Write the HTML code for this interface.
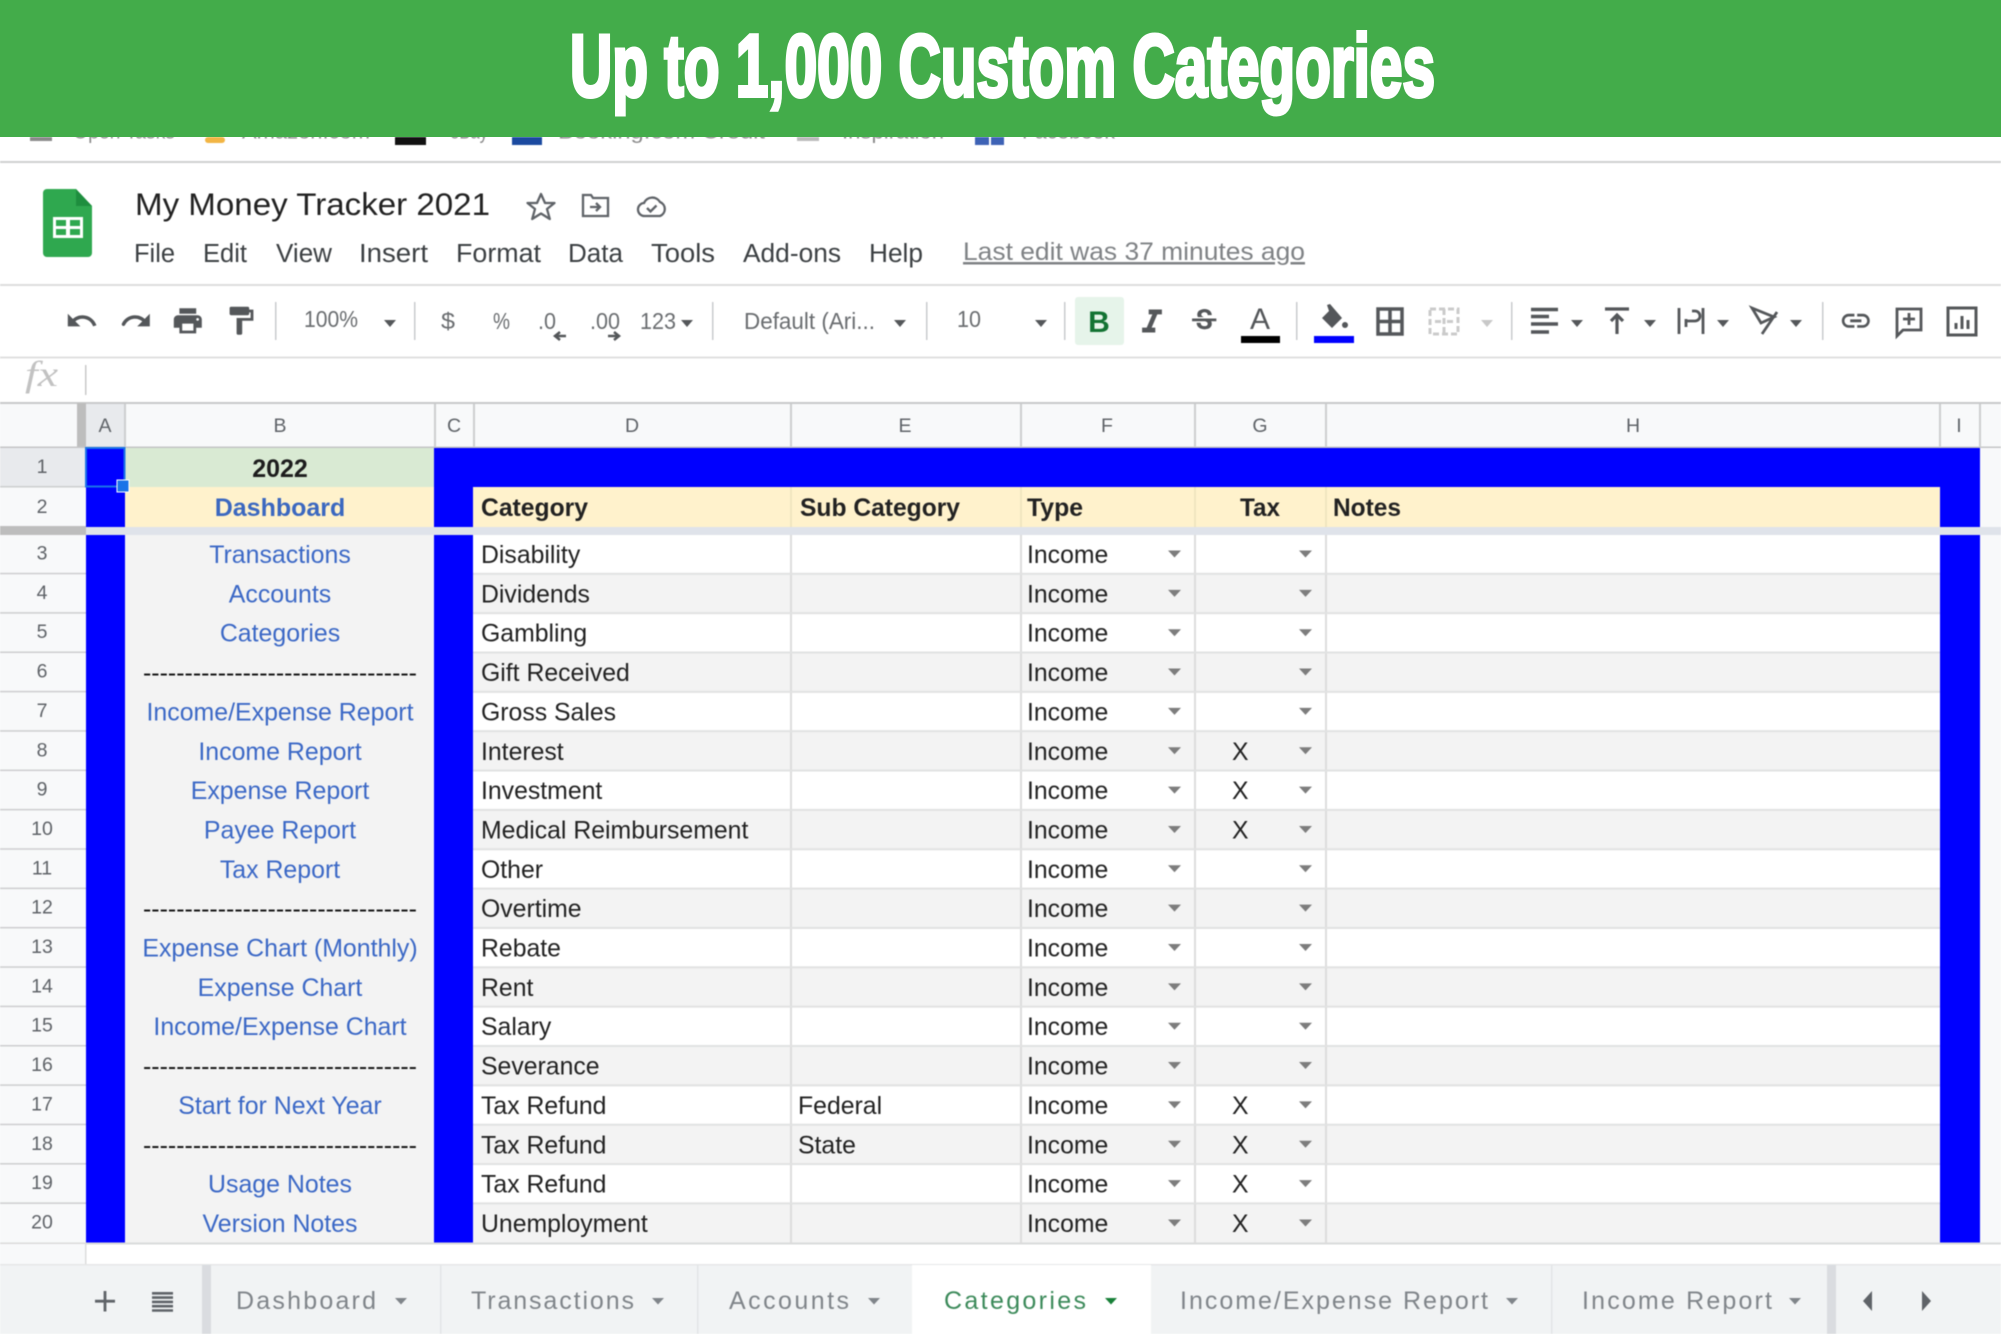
<!DOCTYPE html>
<html><head><meta charset="utf-8"><title>My Money Tracker 2021</title>
<style>
html,body{margin:0;padding:0;background:#fff;width:2001px;height:1334px;overflow:hidden}
svg{display:block;font-family:"Liberation Sans",Arial,sans-serif}
.soft{filter:blur(.5px)}
.n{font-size:19.5px;fill:#5f6368;text-anchor:middle}
.h{font-size:19.5px;fill:#5f6368;text-anchor:middle}
.c{font-size:24.8px;fill:#222}
.l{font-size:24.9px;fill:#3b68c6;text-anchor:middle}
.d{font-size:24.6px;fill:#111;text-anchor:middle}
.b{font-size:25px;font-weight:bold;fill:#222}
.m{font-size:25.5px;fill:#3c4043}
.t{font-size:23px;fill:#6a6d70}
.g{font-size:25px;fill:#80858a}
.s{fill:#c9cbce}
.k{fill:#54575a}
</style></head><body>
<svg width="2001" height="1334" viewBox="0 0 2001 1334" xmlns="http://www.w3.org/2000/svg">
<defs><path id="a" d="M0 .5h13l-6.500 7z" fill="#7d7d7d"/><path id="ta" d="M0 0h12l-6 7z" fill="#54575a"/></defs>
<rect width="2001" height="1334" fill="#fff"/>
<g class="soft">
<!-- bookmarks cut by banner -->
<g fill="#8a8a8a" font-size="21">
<text x="73" y="138.500" textLength="102" lengthAdjust="spacingAndGlyphs">Open Tasks</text>
<text x="242" y="138.500" textLength="128" lengthAdjust="spacingAndGlyphs">Amazon.com</text>
<text x="450" y="138.500" textLength="38" lengthAdjust="spacingAndGlyphs">eBay</text>
<text x="558" y="138.500" textLength="207" lengthAdjust="spacingAndGlyphs">Booking.com Credit</text>
<text x="842" y="138.500" textLength="102" lengthAdjust="spacingAndGlyphs">Inspiration</text>
<text x="1022" y="138.500" textLength="93" lengthAdjust="spacingAndGlyphs">Facebook</text>
</g>
<rect x="30" y="137" width="22" height="4" fill="#8a8a8a"/>
<rect x="205" y="137" width="20" height="6" rx="3" fill="#f2b544"/>
<rect x="395" y="137" width="31" height="8" fill="#111"/>
<rect x="512" y="137" width="30" height="8" fill="#1b4aa0"/>
<rect x="797" y="137" width="22" height="4" fill="#bbb"/>
<rect x="975" y="137" width="14" height="8" fill="#3d62b5"/><rect x="991" y="137" width="13" height="8" fill="#3d62b5"/>

<rect y="161" width="2001" height="2" fill="#cfd0d1"/>

<!-- header -->
<path d="M47 189h29l16 17v47a4 4 0 0 1-4 4H47a4 4 0 0 1-4-4v-60a4 4 0 0 1 4-4z" fill="#2fa84f"/>
<path d="M76 189l16 17H76z" fill="#1e8e3e"/>
<path d="M53 217h30v21H53zM56 220v6h10v-6zM70 220v6h10v-6zM56 229v6h10v-6zM70 229v6h10v-6z" fill="#fff" fill-rule="evenodd"/>
<text x="135" y="215" font-size="31.500" fill="#222" textLength="355" lengthAdjust="spacingAndGlyphs">My Money Tracker 2021</text>
<path d="M541 194l4 9h9.500l-7.500 6 2.800 10-8.800-5.500-8.800 5.500 2.800-10-7.500-6h9.500z" fill="none" stroke="#5f6368" stroke-width="2.300" stroke-linejoin="round"/>
<path d="M583 195h8l2 3h15v18h-25zM590 207h10M596 203l4 4-4 4" fill="none" stroke="#5f6368" stroke-width="2.300"/>
<path d="M645 216a6.500 6.500 0 0 1-1-13 9 9 0 0 1 16-1 7.500 7.500 0 0 1 0 14zM647 208l3.500 3.500 6-6" fill="none" stroke="#5f6368" stroke-width="2.300"/>

<text class="m" x="134" y="262" textLength="41" lengthAdjust="spacingAndGlyphs">File</text>
<text class="m" x="203" y="262" textLength="44" lengthAdjust="spacingAndGlyphs">Edit</text>
<text class="m" x="276" y="262" textLength="56" lengthAdjust="spacingAndGlyphs">View</text>
<text class="m" x="359" y="262" textLength="69" lengthAdjust="spacingAndGlyphs">Insert</text>
<text class="m" x="456" y="262" textLength="85" lengthAdjust="spacingAndGlyphs">Format</text>
<text class="m" x="568" y="262" textLength="55" lengthAdjust="spacingAndGlyphs">Data</text>
<text class="m" x="651" y="262" textLength="64" lengthAdjust="spacingAndGlyphs">Tools</text>
<text class="m" x="743" y="262" textLength="98" lengthAdjust="spacingAndGlyphs">Add-ons</text>
<text class="m" x="869" y="262" textLength="54" lengthAdjust="spacingAndGlyphs">Help</text>
<text x="963" y="260" font-size="25" fill="#7f8285" text-decoration="underline" textLength="342" lengthAdjust="spacingAndGlyphs">Last edit was 37 minutes ago</text>

<rect y="284" width="2001" height="2" fill="#dcdddd"/>

<!-- toolbar -->
<g class="k">
<path transform="translate(65,304) scale(1.400)" d="M12.500 8c-2.650 0-5.050.99-6.900 2.600L2 7v9h9l-3.620-3.620c1.390-1.160 3.160-1.880 5.120-1.880 3.540 0 6.550 2.310 7.600 5.500l2.370-.78C21.080 11.030 17.150 8 12.500 8z"/>
<path transform="translate(119,304) scale(1.400)" d="M18.400 10.600C16.550 8.990 14.150 8 11.500 8c-4.160 0-7.740 2.420-9.440 5.930-.32.67.04 1.470.75 1.710.59.2 1.230-.08 1.500-.64 1.300-2.660 4.030-4.500 7.190-4.500 1.950 0 3.730.72 5.120 1.880L13 16h9V7l-3.600 3.600z"/>
<path transform="translate(171,304) scale(1.400)" d="M19 8H5c-1.660 0-3 1.340-3 3v6h4v4h12v-4h4v-6c0-1.660-1.340-3-3-3zm-3 11H8v-5h8v5zm3-7c-.55 0-1-.45-1-1s.45-1 1-1 1 .45 1 1-.45 1-1 1zm-1-9H6v4h12V3z"/>
<path transform="translate(224,304) scale(1.400)" d="M18 4V3c0-.55-.45-1-1-1H5c-.55 0-1 .45-1 1v4c0 .55.45 1 1 1h12c.55 0 1-.45 1-1V6h1v4H9v11c0 .55.45 1 1 1h2c.55 0 1-.45 1-1v-9h8V4h-3z"/>
</g>
<rect class="s" x="275" y="302" width="1.500" height="38"/><rect class="s" x="414" y="302" width="1.500" height="38"/><rect class="s" x="712" y="302" width="1.500" height="38"/><rect class="s" x="926" y="302" width="1.500" height="38"/><rect class="s" x="1064" y="302" width="1.500" height="38"/><rect class="s" x="1296" y="302" width="1.500" height="38"/><rect class="s" x="1511" y="302" width="1.500" height="38"/><rect class="s" x="1822" y="302" width="1.500" height="38"/>

<text class="t" x="304" y="327" textLength="54" lengthAdjust="spacingAndGlyphs">100%</text>
<use href="#ta" x="384" y="320"/>
<text class="t" x="441" y="329" textLength="14" lengthAdjust="spacingAndGlyphs">$</text>
<text class="t" x="493" y="329" textLength="17" lengthAdjust="spacingAndGlyphs">%</text>
<text class="t" x="538" y="329" textLength="18" lengthAdjust="spacingAndGlyphs">.0</text>
<path d="M566 336h-10M560 332l-5 4 5 4" fill="none" stroke="#54575a" stroke-width="2.500"/>
<text class="t" x="590" y="329" textLength="30" lengthAdjust="spacingAndGlyphs">.00</text>
<path d="M608 336h10M614 332l5 4-5 4" fill="none" stroke="#54575a" stroke-width="2.500"/>
<text class="t" x="640" y="329" textLength="36" lengthAdjust="spacingAndGlyphs">123</text>
<use href="#ta" x="681" y="320"/>
<text class="t" x="744" y="329" textLength="131" lengthAdjust="spacingAndGlyphs">Default (Ari...</text>
<use href="#ta" x="894" y="320"/>
<text class="t" x="957" y="327" textLength="24" lengthAdjust="spacingAndGlyphs">10</text>
<use href="#ta" x="1035" y="320"/>

<rect x="1075" y="297" width="49" height="48" rx="3" fill="#e6f4ea"/>
<text x="1099" y="332" font-size="30" font-weight="bold" fill="#137333" text-anchor="middle">B</text>
<path class="k" transform="translate(1132.200,302.850) scale(1.650)" d="M10 4v3h2.210l-3.420 8H6v3h8v-3h-2.210l3.420-8H18V4z"/>
<path class="k" transform="translate(1188,305) scale(1.350)" d="M7.240 8.750c-.26-.48-.39-1.030-.39-1.670 0-.61.13-1.160.4-1.670.26-.5.63-.93 1.110-1.290.48-.35 1.050-.63 1.700-.83.66-.19 1.390-.29 2.180-.29.81 0 1.540.11 2.210.34.66.22 1.230.54 1.690.94.47.4.83.88 1.080 1.430.25.55.38 1.150.38 1.810h-3.010c0-.31-.05-.59-.15-.85-.09-.27-.24-.49-.44-.68-.2-.19-.45-.33-.75-.44-.3-.1-.66-.16-1.060-.16-.39 0-.74.04-1.030.13-.29.09-.53.21-.72.36-.19.16-.34.34-.44.55-.1.21-.15.43-.15.66 0 .48.25.88.74 1.210.38.25.77.48 1.410.7H7.390c-.05-.08-.11-.17-.15-.25zM21 12v-2H3v2h9.620c.18.07.4.14.55.2.37.17.66.34.87.51.21.17.35.36.43.57.07.2.11.43.11.69 0 .23-.05.45-.14.66-.09.2-.23.38-.42.53-.19.15-.42.26-.71.35-.29.08-.63.13-1.010.13-.43 0-.83-.04-1.180-.13s-.66-.23-.91-.42c-.25-.19-.45-.44-.59-.75-.14-.31-.25-.76-.25-1.210H6.400c0 .55.08 1.130.24 1.580.16.45.37.85.65 1.210.28.35.6.66.98.92.37.26.78.48 1.220.65.44.17.9.3 1.380.39.48.08.96.13 1.440.13.8 0 1.530-.09 2.180-.28s1.210-.45 1.670-.79c.46-.34.82-.77 1.070-1.270s.38-1.070.38-1.710c0-.6-.1-1.140-.31-1.610-.05-.11-.11-.23-.17-.33H21z"/>
<text x="1260" y="329" font-size="30" fill="#54575a" text-anchor="middle">A</text>
<rect x="1241" y="336" width="39" height="7" fill="#000"/>
<path class="k" d="M1327 305l3-1 12 14-10 10-10-10 7-7z"/><circle class="k" cx="1345" cy="325" r="3"/>
<rect x="1314" y="336" width="40" height="7" fill="#0000ff"/>
<path d="M1378 309h24v25h-24zM1390 309v25M1378 321.500h24" fill="none" stroke="#54575a" stroke-width="3.500"/>
<path d="M1430 309h28v25h-28zM1444 309v25" fill="none" stroke="#cbcbcb" stroke-width="3" stroke-dasharray="6 3"/>
<path d="M1435 321.500h6M1447 321.500h6" stroke="#cbcbcb" stroke-width="3"/>
<path d="M1481 320h12l-6 7z" fill="#c8c8c8"/>
<path d="M1531 309.500h27M1531 316.500h18M1531 324h27M1531 332h18" stroke="#54575a" stroke-width="3.500" fill="none"/>
<use href="#ta" x="1571" y="320"/>
<path d="M1605 309h24M1617 334v-19M1611 321l6-6 6 6" stroke="#54575a" stroke-width="3.200" fill="none"/>
<use href="#ta" x="1644" y="320"/>
<path d="M1679 308v26M1703 308v26M1686 321h9a3 3 0 0 0 0-10h-3M1686 327v-8" stroke="#54575a" stroke-width="2.800" fill="none"/>
<use href="#ta" x="1717" y="320"/>
<path d="M1752 308l22 9-13 6zM1777 312l-15 22" stroke="#54575a" stroke-width="2.800" fill="none"/>
<use href="#ta" x="1790" y="320"/>
<path class="k" transform="translate(1839,304) scale(1.400)" d="M3.900 12c0-1.710 1.390-3.100 3.100-3.100h4V7H7c-2.760 0-5 2.240-5 5s2.240 5 5 5h4v-1.900H7c-1.710 0-3.100-1.390-3.100-3.100zM8 13h8v-2H8v2zm9-6h-4v1.900h4c1.710 0 3.100 1.390 3.100 3.100s-1.390 3.100-3.100 3.100h-4V17h4c2.760 0 5-2.240 5-5s-2.240-5-5-5z"/>
<path d="M1897 309h24v21h-18l-6 6zM1909 313v12M1903 319h12" fill="none" stroke="#54575a" stroke-width="2.800"/>
<path d="M1948 308h28v27h-28zM1956 329v-6M1962 329v-13M1968 329v-9" fill="none" stroke="#54575a" stroke-width="3"/>

<rect y="356.500" width="2001" height="2" fill="#e0e0e0"/>
<text x="25" y="386" font-family="Liberation Serif,serif" font-style="italic" font-size="36" fill="#c2c2c2" textLength="33" lengthAdjust="spacingAndGlyphs">fx</text>
<rect x="85" y="365" width="1.500" height="30" fill="#c9c9c9"/>

<!-- column headers -->
<rect y="402" width="2001" height="46" fill="#f8f9fa"/>
<rect y="402" width="2001" height="2" fill="#c8c9ca"/>
<rect x="77" y="403" width="9" height="45" fill="#bdbdbd"/>
<rect x="86" y="404" width="39" height="43" fill="#e8eaed"/>
<rect y="446.500" width="2001" height="1.500" fill="#c4c5c6"/>
<g fill="#ccced0"><rect x="124" y="404" width="2" height="43"/><rect x="434" y="404" width="2" height="43"/><rect x="473" y="404" width="2" height="43"/><rect x="790" y="404" width="2" height="43"/><rect x="1020" y="404" width="2" height="43"/><rect x="1194" y="404" width="2" height="43"/><rect x="1325" y="404" width="2" height="43"/><rect x="1939" y="404" width="2" height="43"/><rect x="1979" y="404" width="2" height="43"/></g>
<text class="h" x="105" y="432">A</text><text class="h" x="280" y="432">B</text><text class="h" x="454" y="432">C</text><text class="h" x="632" y="432">D</text><text class="h" x="905" y="432">E</text><text class="h" x="1107" y="432">F</text><text class="h" x="1260" y="432">G</text><text class="h" x="1633" y="432">H</text><text class="h" x="1959" y="432">I</text>

<!-- sheet base -->
<rect y="448" width="86" height="796" fill="#f8f9fa"/>
<rect x="0" y="448" width="86" height="38" fill="#e8eaed"/>
<rect x="1980" y="448" width="21" height="796" fill="#f8f9fa"/>
<rect x="86" y="448" width="39" height="796" fill="#0000ff"/>
<rect x="125" y="535" width="309" height="709" fill="#f3f3f3"/>
<rect x="434" y="448" width="39" height="796" fill="#0000ff"/>
<rect x="1940" y="448" width="40" height="796" fill="#0000ff"/>
<rect x="473" y="448" width="1467" height="39" fill="#0000ff"/>
<rect x="125" y="448" width="309" height="39" fill="#d9ead3"/>
<rect x="125" y="487" width="309" height="40" fill="#fff2cc"/>
<rect x="473" y="487" width="1467" height="40" fill="#fff2cc"/>
<rect x="473" y="535" width="1467" height="709" fill="#fff"/>
<g fill="#f3f3f3"><rect x="473" y="574.350" width="1467" height="39.350"/><rect x="473" y="653.050" width="1467" height="39.350"/><rect x="473" y="731.750" width="1467" height="39.350"/><rect x="473" y="810.450" width="1467" height="39.350"/><rect x="473" y="889.150" width="1467" height="39.350"/><rect x="473" y="967.850" width="1467" height="39.350"/><rect x="473" y="1046.550" width="1467" height="39.350"/><rect x="473" y="1125.250" width="1467" height="39.350"/><rect x="473" y="1203.950" width="1467" height="39.350"/></g>
<!-- grid lines -->
<g fill="#dcdcdc"><rect x="790" y="535" width="2" height="708"/><rect x="1020" y="535" width="2" height="708"/><rect x="1194" y="535" width="2" height="708"/><rect x="1325" y="535" width="2" height="708"/></g>
<g fill="#f0e5bf"><rect x="790" y="487" width="2" height="40"/><rect x="1020" y="487" width="2" height="40"/><rect x="1194" y="487" width="2" height="40"/><rect x="1325" y="487" width="2" height="40"/></g>
<g fill="#e1e2e2"><rect x="473" y="572.800" width="1467" height="2"/><rect x="473" y="612.150" width="1467" height="2"/><rect x="473" y="651.500" width="1467" height="2"/><rect x="473" y="690.850" width="1467" height="2"/><rect x="473" y="730.200" width="1467" height="2"/><rect x="473" y="769.550" width="1467" height="2"/><rect x="473" y="808.900" width="1467" height="2"/><rect x="473" y="848.250" width="1467" height="2"/><rect x="473" y="887.600" width="1467" height="2"/><rect x="473" y="926.950" width="1467" height="2"/><rect x="473" y="966.300" width="1467" height="2"/><rect x="473" y="1005.650" width="1467" height="2"/><rect x="473" y="1045" width="1467" height="2"/><rect x="473" y="1084.350" width="1467" height="2"/><rect x="473" y="1123.700" width="1467" height="2"/><rect x="473" y="1163.050" width="1467" height="2"/><rect x="473" y="1202.400" width="1467" height="2"/></g>
<g fill="#cdcecf"><rect y="486" width="86" height="1.500"/><rect y="572.800" width="86" height="1.500"/><rect y="612.150" width="86" height="1.500"/><rect y="651.500" width="86" height="1.500"/><rect y="690.850" width="86" height="1.500"/><rect y="730.200" width="86" height="1.500"/><rect y="769.550" width="86" height="1.500"/><rect y="808.900" width="86" height="1.500"/><rect y="848.250" width="86" height="1.500"/><rect y="887.600" width="86" height="1.500"/><rect y="926.950" width="86" height="1.500"/><rect y="966.300" width="86" height="1.500"/><rect y="1005.650" width="86" height="1.500"/><rect y="1045" width="86" height="1.500"/><rect y="1084.350" width="86" height="1.500"/><rect y="1123.700" width="86" height="1.500"/><rect y="1163.050" width="86" height="1.500"/><rect y="1202.400" width="86" height="1.500"/></g>
<rect y="1242.500" width="2001" height="2" fill="#dadbdb"/>
<!-- freeze band -->
<rect y="527" width="2001" height="8" fill="#dfe3ea"/>
<rect y="526" width="86" height="9" fill="#bdbdbd"/>

<!-- selection -->
<rect x="86" y="448" width="38.500" height="38.500" fill="none" stroke="#1a73e8" stroke-width="2"/>
<rect x="117" y="480" width="12" height="12" fill="#1a73e8" stroke="#fff" stroke-width="1"/>

<!-- rows 1-2 -->
<text class="n" x="42" y="473">1</text>
<text x="280" y="477" font-size="25" font-weight="bold" fill="#1d1d1d" text-anchor="middle">2022</text>
<text class="n" x="42" y="513">2</text>
<text x="280" y="516" font-size="25" font-weight="bold" fill="#3b68c0" text-anchor="middle">Dashboard</text>
<text class="b" x="481" y="516" textLength="107" lengthAdjust="spacingAndGlyphs">Category</text>
<text class="b" x="800" y="516" textLength="160" lengthAdjust="spacingAndGlyphs">Sub Category</text>
<text class="b" x="1027" y="516" textLength="56" lengthAdjust="spacingAndGlyphs">Type</text>
<text class="b" x="1240" y="516" textLength="40" lengthAdjust="spacingAndGlyphs">Tax</text>
<text class="b" x="1333" y="516" textLength="68" lengthAdjust="spacingAndGlyphs">Notes</text>

<!-- data rows -->
<g transform="translate(0,535)"><text class="n" x="42" y="24.500">3</text><text class="l" x="280" y="28">Transactions</text><text class="c" x="481" y="28">Disability</text><text class="c" x="1027" y="28">Income</text><use href="#a" x="1168" y="15"/><use href="#a" x="1299" y="15"/></g>
<g transform="translate(0,574.350)"><text class="n" x="42" y="24.500">4</text><text class="l" x="280" y="28">Accounts</text><text class="c" x="481" y="28">Dividends</text><text class="c" x="1027" y="28">Income</text><use href="#a" x="1168" y="15"/><use href="#a" x="1299" y="15"/></g>
<g transform="translate(0,613.700)"><text class="n" x="42" y="24.500">5</text><text class="l" x="280" y="28">Categories</text><text class="c" x="481" y="28">Gambling</text><text class="c" x="1027" y="28">Income</text><use href="#a" x="1168" y="15"/><use href="#a" x="1299" y="15"/></g>
<g transform="translate(0,653.050)"><text class="n" x="42" y="24.500">6</text><text class="d" x="280" y="28" textLength="274" lengthAdjust="spacingAndGlyphs">---------------------------------</text><text class="c" x="481" y="28">Gift Received</text><text class="c" x="1027" y="28">Income</text><use href="#a" x="1168" y="15"/><use href="#a" x="1299" y="15"/></g>
<g transform="translate(0,692.400)"><text class="n" x="42" y="24.500">7</text><text class="l" x="280" y="28">Income/Expense Report</text><text class="c" x="481" y="28">Gross Sales</text><text class="c" x="1027" y="28">Income</text><use href="#a" x="1168" y="15"/><use href="#a" x="1299" y="15"/></g>
<g transform="translate(0,731.750)"><text class="n" x="42" y="24.500">8</text><text class="l" x="280" y="28">Income Report</text><text class="c" x="481" y="28">Interest</text><text class="c" x="1027" y="28">Income</text><use href="#a" x="1168" y="15"/><text class="c" x="1232" y="28">X</text><use href="#a" x="1299" y="15"/></g>
<g transform="translate(0,771.100)"><text class="n" x="42" y="24.500">9</text><text class="l" x="280" y="28">Expense Report</text><text class="c" x="481" y="28">Investment</text><text class="c" x="1027" y="28">Income</text><use href="#a" x="1168" y="15"/><text class="c" x="1232" y="28">X</text><use href="#a" x="1299" y="15"/></g>
<g transform="translate(0,810.450)"><text class="n" x="42" y="24.500">10</text><text class="l" x="280" y="28">Payee Report</text><text class="c" x="481" y="28">Medical Reimbursement</text><text class="c" x="1027" y="28">Income</text><use href="#a" x="1168" y="15"/><text class="c" x="1232" y="28">X</text><use href="#a" x="1299" y="15"/></g>
<g transform="translate(0,849.800)"><text class="n" x="42" y="24.500">11</text><text class="l" x="280" y="28">Tax Report</text><text class="c" x="481" y="28">Other</text><text class="c" x="1027" y="28">Income</text><use href="#a" x="1168" y="15"/><use href="#a" x="1299" y="15"/></g>
<g transform="translate(0,889.150)"><text class="n" x="42" y="24.500">12</text><text class="d" x="280" y="28" textLength="274" lengthAdjust="spacingAndGlyphs">---------------------------------</text><text class="c" x="481" y="28">Overtime</text><text class="c" x="1027" y="28">Income</text><use href="#a" x="1168" y="15"/><use href="#a" x="1299" y="15"/></g>
<g transform="translate(0,928.500)"><text class="n" x="42" y="24.500">13</text><text class="l" x="280" y="28">Expense Chart (Monthly)</text><text class="c" x="481" y="28">Rebate</text><text class="c" x="1027" y="28">Income</text><use href="#a" x="1168" y="15"/><use href="#a" x="1299" y="15"/></g>
<g transform="translate(0,967.850)"><text class="n" x="42" y="24.500">14</text><text class="l" x="280" y="28">Expense Chart</text><text class="c" x="481" y="28">Rent</text><text class="c" x="1027" y="28">Income</text><use href="#a" x="1168" y="15"/><use href="#a" x="1299" y="15"/></g>
<g transform="translate(0,1007.200)"><text class="n" x="42" y="24.500">15</text><text class="l" x="280" y="28">Income/Expense Chart</text><text class="c" x="481" y="28">Salary</text><text class="c" x="1027" y="28">Income</text><use href="#a" x="1168" y="15"/><use href="#a" x="1299" y="15"/></g>
<g transform="translate(0,1046.550)"><text class="n" x="42" y="24.500">16</text><text class="d" x="280" y="28" textLength="274" lengthAdjust="spacingAndGlyphs">---------------------------------</text><text class="c" x="481" y="28">Severance</text><text class="c" x="1027" y="28">Income</text><use href="#a" x="1168" y="15"/><use href="#a" x="1299" y="15"/></g>
<g transform="translate(0,1085.900)"><text class="n" x="42" y="24.500">17</text><text class="l" x="280" y="28">Start for Next Year</text><text class="c" x="481" y="28">Tax Refund</text><text class="c" x="798" y="28">Federal</text><text class="c" x="1027" y="28">Income</text><use href="#a" x="1168" y="15"/><text class="c" x="1232" y="28">X</text><use href="#a" x="1299" y="15"/></g>
<g transform="translate(0,1125.250)"><text class="n" x="42" y="24.500">18</text><text class="d" x="280" y="28" textLength="274" lengthAdjust="spacingAndGlyphs">---------------------------------</text><text class="c" x="481" y="28">Tax Refund</text><text class="c" x="798" y="28">State</text><text class="c" x="1027" y="28">Income</text><use href="#a" x="1168" y="15"/><text class="c" x="1232" y="28">X</text><use href="#a" x="1299" y="15"/></g>
<g transform="translate(0,1164.600)"><text class="n" x="42" y="24.500">19</text><text class="l" x="280" y="28">Usage Notes</text><text class="c" x="481" y="28">Tax Refund</text><text class="c" x="1027" y="28">Income</text><use href="#a" x="1168" y="15"/><text class="c" x="1232" y="28">X</text><use href="#a" x="1299" y="15"/></g>
<g transform="translate(0,1203.950)"><text class="n" x="42" y="24.500">20</text><text class="l" x="280" y="28">Version Notes</text><text class="c" x="481" y="28">Unemployment</text><text class="c" x="1027" y="28">Income</text><use href="#a" x="1168" y="15"/><text class="c" x="1232" y="28">X</text><use href="#a" x="1299" y="15"/></g>

<!-- below grid -->
<rect y="1244" width="85" height="21" fill="#f8f9fa"/>
<rect x="85" y="1244" width="1.500" height="21" fill="#dcdcdc"/>

<!-- tab bar -->
<rect y="1265" width="2001" height="69" fill="#f1f3f4"/>
<rect y="1264" width="2001" height="1.500" fill="#e6e7e8"/>
<path d="M95 1299.800h20v2.800h-20zM103.600 1291h2.800v20.500h-2.800z" fill="#5f6368"/>
<path d="M152 1292h21v2.600h-21zM152 1296.300h21v2.600h-21zM152 1300.600h21v2.600h-21zM152 1304.900h21v2.600h-21zM152 1309.200h21v2.600h-21z" fill="#5f6368"/>
<rect x="202" y="1265" width="9" height="69" fill="#dadce0"/>
<rect x="440" y="1265" width="1.500" height="69" fill="#e3e5e7"/>
<rect x="697" y="1265" width="1.500" height="69" fill="#e3e5e7"/>
<rect x="912" y="1265" width="239" height="69" fill="#fff"/>
<rect x="1551" y="1265" width="1.500" height="69" fill="#e3e5e7"/>
<rect x="1827" y="1265" width="9" height="69" fill="#dadce0"/>
<text class="g" x="236" y="1309" textLength="140" lengthAdjust="spacing">Dashboard</text>
<path d="M395 1298h12l-6 6.500z" fill="#80858a"/>
<text class="g" x="471" y="1309" textLength="163" lengthAdjust="spacing">Transactions</text>
<path d="M652 1298h12l-6 6.500z" fill="#80858a"/>
<text class="g" x="729" y="1309" textLength="120" lengthAdjust="spacing">Accounts</text>
<path d="M868 1298h12l-6 6.500z" fill="#80858a"/>
<text x="944" y="1309" font-size="25" fill="#3c8a5a" textLength="142" lengthAdjust="spacing">Categories</text>
<path d="M1105 1298h12l-6 6.500z" fill="#188038"/>
<text class="g" x="1180" y="1309" textLength="308" lengthAdjust="spacing">Income/Expense Report</text>
<path d="M1506 1298h12l-6 6.500z" fill="#80858a"/>
<text class="g" x="1582" y="1309" textLength="190" lengthAdjust="spacing">Income Report</text>
<path d="M1789 1298h12l-6 6.500z" fill="#80858a"/>
<path d="M1872 1291v20l-9-10z" fill="#5f6368"/>
<path d="M1922 1291v20l9-10z" fill="#5f6368"/>
</g>

<!-- banner -->
<rect width="2001" height="137" fill="#43ac4a"/>
<text x="570" y="96" font-size="88" font-weight="bold" fill="#fff" stroke="#fff" stroke-width="4" textLength="865" lengthAdjust="spacingAndGlyphs">Up to 1,000 Custom Categories</text>
</svg>
</body></html>
